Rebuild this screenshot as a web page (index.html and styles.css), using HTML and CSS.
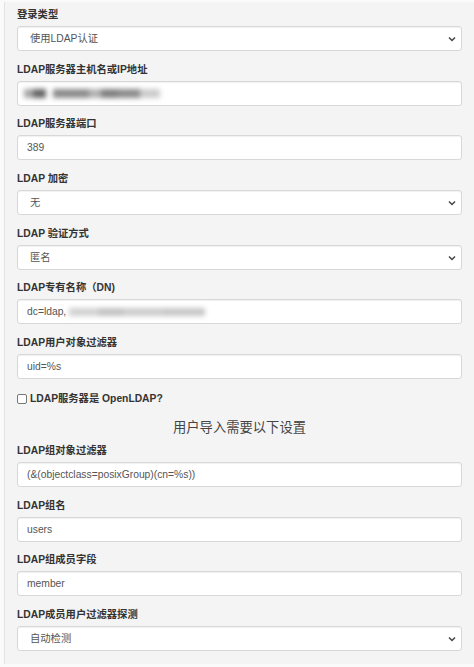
FILE: index.html
```html
<!DOCTYPE html>
<html lang="zh-CN">
<head>
<meta charset="utf-8">
<title>LDAP 设置</title>
<link rel="stylesheet" href="styles.css">
</head>
<body>
<form class="panel">
  <div class="group">
    <label class="label">登录类型</label>
    <div class="select-wrap">
      <select class="control select"><option>使用LDAP认证</option></select>
      <svg class="chev" width="8" height="6" viewBox="0 0 8 6"><path d="M1 1.5 L4 4.5 L7 1.5" fill="none" stroke="#444" stroke-width="1.5"/></svg>
    </div>
  </div>
  <div class="group">
    <label class="label">LDAP服务器主机名或IP地址</label>
    <div class="control">
      <span class="blur host" aria-label="已隐藏">
        <i class="b h1"></i><i class="b h2"></i><i class="gap"></i><i class="b h3"></i><i class="b h4"></i><i class="b h5"></i><i class="b h6"></i><i class="b h7"></i>
      </span>
    </div>
  </div>
  <div class="group">
    <label class="label">LDAP服务器端口</label>
    <input class="control" type="text" value="389">
  </div>
  <div class="group">
    <label class="label">LDAP 加密</label>
    <div class="select-wrap">
      <select class="control select"><option>无</option></select>
      <svg class="chev" width="8" height="6" viewBox="0 0 8 6"><path d="M1 1.5 L4 4.5 L7 1.5" fill="none" stroke="#444" stroke-width="1.5"/></svg>
    </div>
  </div>
  <div class="group">
    <label class="label">LDAP 验证方式</label>
    <div class="select-wrap">
      <select class="control select"><option>匿名</option></select>
      <svg class="chev" width="8" height="6" viewBox="0 0 8 6"><path d="M1 1.5 L4 4.5 L7 1.5" fill="none" stroke="#444" stroke-width="1.5"/></svg>
    </div>
  </div>
  <div class="group">
    <label class="label">LDAP专有名称（DN)</label>
    <div class="control">
      <span>dc=ldap,</span>
      <span class="blur dn" aria-label="已隐藏">
        <i class="b d1"></i><i class="b d2"></i><i class="b d3"></i><i class="b d4"></i>
      </span>
    </div>
  </div>
  <div class="group">
    <label class="label">LDAP用户对象过滤器</label>
    <input class="control" type="text" value="uid=%s">
  </div>
  <div class="check-row">
    <input class="check" type="checkbox" id="openldap">
    <label class="check-label" for="openldap">LDAP服务器是 OpenLDAP?</label>
  </div>
  <h3 class="section-title">用户导入需要以下设置</h3>
  <div class="group">
    <label class="label">LDAP组对象过滤器</label>
    <input class="control" type="text" value="(&amp;(objectclass=posixGroup)(cn=%s))">
  </div>
  <div class="group">
    <label class="label">LDAP组名</label>
    <input class="control" type="text" value="users">
  </div>
  <div class="group">
    <label class="label">LDAP组成员字段</label>
    <input class="control" type="text" value="member">
  </div>
  <div class="group last">
    <label class="label">LDAP成员用户过滤器探测</label>
    <div class="select-wrap">
      <select class="control select"><option>自动检测</option></select>
      <svg class="chev" width="8" height="6" viewBox="0 0 8 6"><path d="M1 1.5 L4 4.5 L7 1.5" fill="none" stroke="#444" stroke-width="1.5"/></svg>
    </div>
  </div>
</form>
</body>
</html>
```
FILE: styles.css
```css
html, body {
  margin: 0;
  padding: 0;
  background: #fafafa;
}
body {
  font-family: "Liberation Sans", "Noto Sans CJK SC", sans-serif;
  color: #333;
}
.panel {
  margin: 2px 0 0 4px;
  border-left: 1px solid #e2e2e2;
  background: #f4f4f4;
  padding: 5px 12px 13px 12px;
  display: flex;
  flex-direction: column;
}
.group {
  display: flex;
  flex-direction: column;
  gap: 3px;
  margin-bottom: 10.67px;
}
.group.last {
  margin-bottom: 0;
}
.label {
  font-size: 10.3px;
  font-weight: bold;
  line-height: 16px;
  color: #333;
}
.control {
  box-sizing: border-box;
  width: 100%;
  height: 25px;
  margin: 0;
  border: 1px solid #d8d8d8;
  border-radius: 3px;
  background: #fff;
  box-shadow: inset 0 1px 1px rgba(0, 0, 0, 0.06);
  padding: 0 9px;
  font-family: "Liberation Sans", "Noto Sans CJK SC", sans-serif;
  font-size: 10.3px;
  color: #555;
  display: flex;
  align-items: center;
  white-space: nowrap;
  outline: none;
}
.select-wrap {
  position: relative;
}
.select {
  -webkit-appearance: none;
  appearance: none;
  display: block;
  padding: 0 24px 0 12px;
}
.chev {
  position: absolute;
  right: 6px;
  top: 10px;
  pointer-events: none;
}
.blur {
  display: flex;
  align-items: center;
  height: 10px;
  filter: blur(2.6px);
}
.blur .b {
  display: block;
  height: 9px;
  background: #000;
}
.blur .gap {
  display: block;
  width: 7px;
  height: 9px;
}
.blur.host {
  margin-left: -3px;
}
.h1 { width: 9px;  opacity: .35; }
.h2 { width: 13px; opacity: .6; }
.h3 { width: 36px; opacity: .45; }
.h4 { width: 12px; opacity: .3; }
.h5 { width: 17px; opacity: .5; }
.h6 { width: 22px; opacity: .45; }
.h7 { width: 20px; opacity: .2; }
.blur.dn {
  margin-left: 3px;
}
.blur.dn .b {
  height: 8px;
}
.d1 { width: 30px; opacity: .18; }
.d2 { width: 24px; opacity: .24; }
.d3 { width: 40px; opacity: .2; }
.d4 { width: 42px; opacity: .22; }
.check-row {
  display: flex;
  align-items: center;
  height: 18px;
  margin-bottom: 11.33px;
}
.check {
  -webkit-appearance: none;
  appearance: none;
  box-sizing: border-box;
  width: 10px;
  height: 10px;
  margin: 0 3px 0 0;
  border: 1px solid #777;
  border-radius: 2px;
  background: #fff;
}
.check-label {
  font-size: 10.3px;
  font-weight: bold;
  line-height: 18px;
  color: #333;
}
.section-title {
  margin: 0 0 6px 0;
  text-align: center;
  font-size: 13.3px;
  font-weight: normal;
  line-height: 18px;
  color: #444;
}
```
